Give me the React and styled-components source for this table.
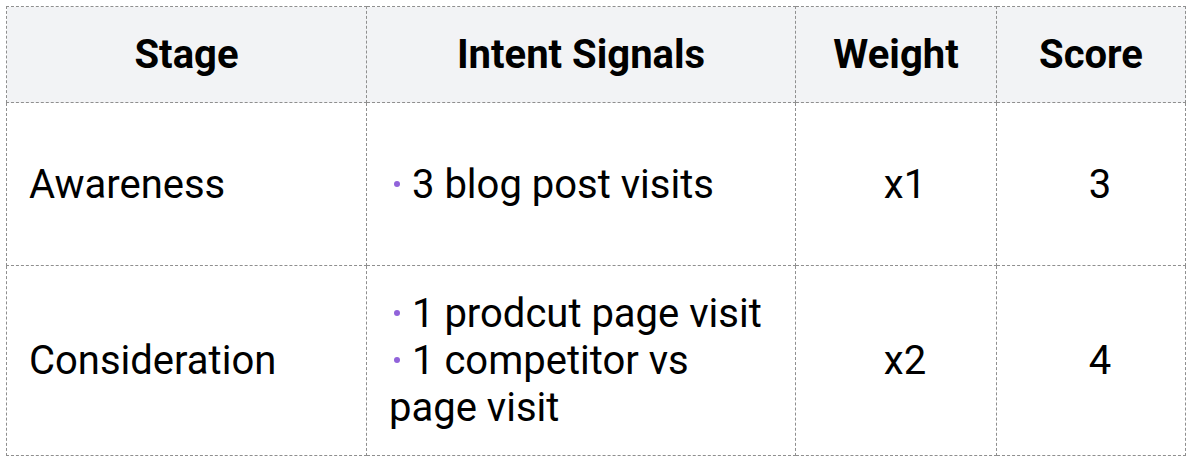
import React from 'react';
import styled, { createGlobalStyle } from 'styled-components';

const GlobalStyle = createGlobalStyle`
  html, body {
    margin: 0;
    padding: 0;
    background: #ffffff;
  }
  body {
    font-family: Roboto, "Noto Sans", sans-serif;
    color: #000000;
  }
`;

const Page = styled.div`
  padding: 6px 6px 4px 6px;
`;

const Table = styled.table`
  width: 1179px;
  border-collapse: collapse;
  table-layout: fixed;
  font-size: 40px;
  line-height: 47px;
`;

const HeadCell = styled.th`
  height: 95px;
  padding: 0 12px;
  background: #f2f3f5;
  font-weight: 700;
  text-align: center;
  border: 1px dashed #8f8f8f;
`;

const Row = styled.tr`
  height: ${p => p.$h}px;
`;

const Cell = styled.td`
  padding: ${p => (p.$center ? '0 0 0 18px' : '0 16px 0 22px')};
  text-align: ${p => (p.$center ? 'center' : 'left')};
  vertical-align: middle;
  border: 1px dashed #8f8f8f;
`;

const Signal = styled.div`
  &::before {
    content: '';
    display: inline-block;
    width: 6px;
    height: 6px;
    border-radius: 50%;
    background: #9163da;
    margin: 0 12px 0 5px;
    vertical-align: middle;
    position: relative;
    top: -3px;
  }
`;

const rows = [
  { stage: 'Awareness', signals: ['3 blog post visits'], weight: 'x1', score: '3', h: 163 },
  {
    stage: 'Consideration',
    signals: ['1 prodcut page visit', '1 competitor vs page visit'],
    weight: 'x2',
    score: '4',
    h: 190
  }
];

const widths = [360, 429, 201, 189];

export default function App() {
  return (
    <Page>
      <GlobalStyle />
      <Table>
        <colgroup>
          {widths.map((w, i) => (
            <col key={i} style={{ width: w }} />
          ))}
        </colgroup>
        <thead>
          <tr>
            <HeadCell>Stage</HeadCell>
            <HeadCell>Intent Signals</HeadCell>
            <HeadCell>Weight</HeadCell>
            <HeadCell>Score</HeadCell>
          </tr>
        </thead>
        <tbody>
          {rows.map(r => (
            <Row key={r.stage} $h={r.h}>
              <Cell>{r.stage}</Cell>
              <Cell>
                {r.signals.map(s => (
                  <Signal key={s}>{s}</Signal>
                ))}
              </Cell>
              <Cell $center>{r.weight}</Cell>
              <Cell $center>{r.score}</Cell>
            </Row>
          ))}
        </tbody>
      </Table>
    </Page>
  );
}
